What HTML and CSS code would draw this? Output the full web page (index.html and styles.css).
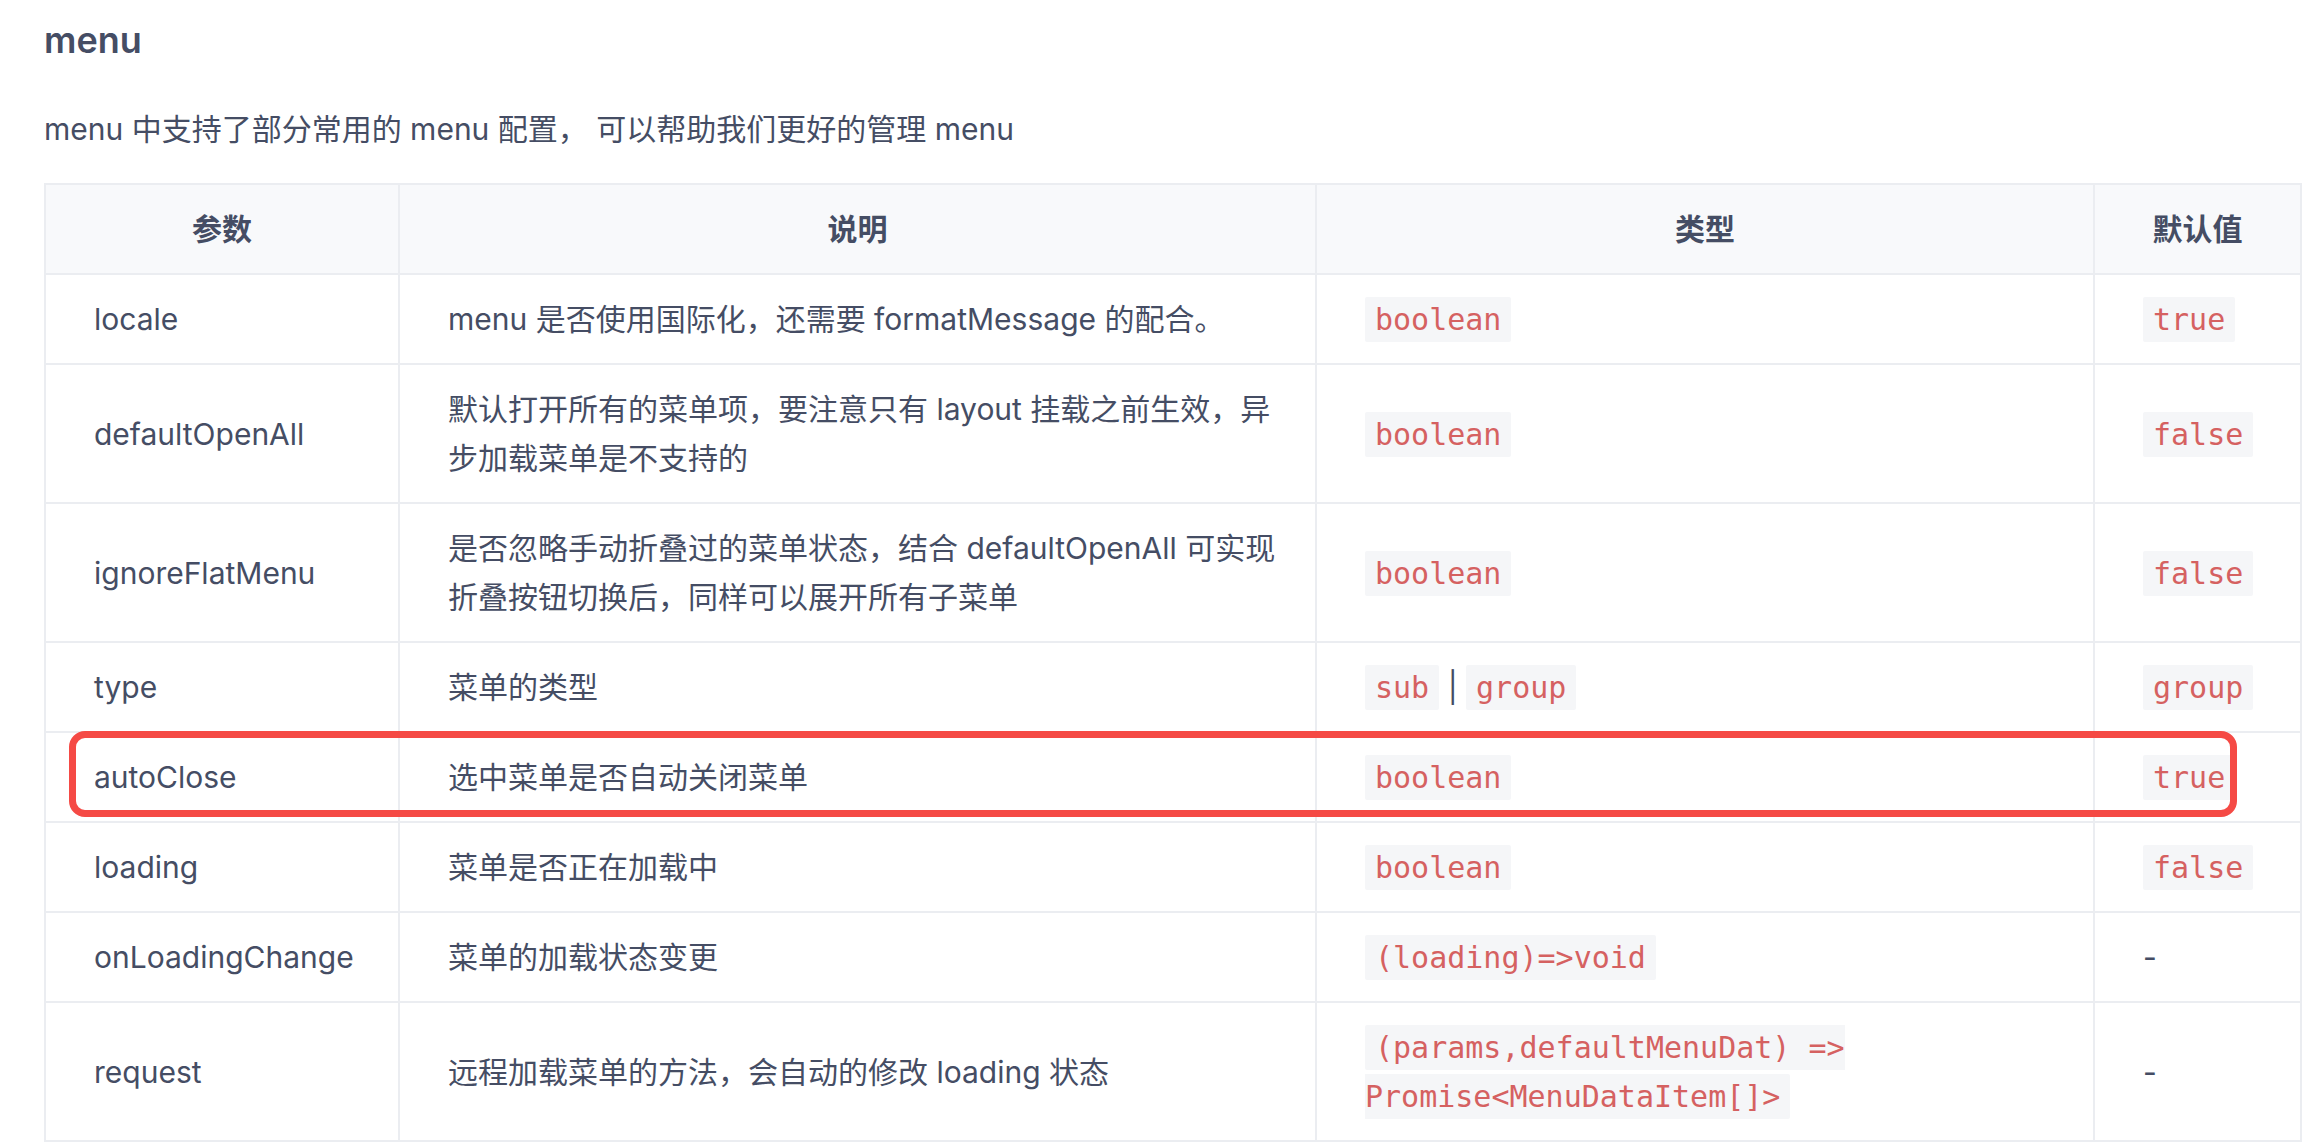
FILE: index.html
```html
<!DOCTYPE html>
<html lang="zh-CN">
<head>
<meta charset="utf-8">
<title>menu</title>
<link rel="stylesheet" href="styles.css">
</head>
<body>
<h2 class="title">menu</h2>
<p class="desc">menu 中支持了部分常用的 menu 配置， 可以帮助我们更好的管理 menu</p>
<div class="table-wrap">
  <table class="api">
    <colgroup>
      <col class="c-name">
      <col class="c-desc">
      <col class="c-type">
      <col class="c-def">
    </colgroup>
    <thead>
      <tr><th>参数</th><th>说明</th><th>类型</th><th>默认值</th></tr>
    </thead>
    <tbody>
      <tr>
        <td>locale</td>
        <td>menu 是否使用国际化，还需要 formatMessage 的配合。</td>
        <td><code>boolean</code></td>
        <td><code>true</code></td>
      </tr>
      <tr>
        <td>defaultOpenAll</td>
        <td>默认打开所有的菜单项，要注意只有 layout 挂载之前生效，异步加载菜单是不支持的</td>
        <td><code>boolean</code></td>
        <td><code>false</code></td>
      </tr>
      <tr>
        <td>ignoreFlatMenu</td>
        <td>是否忽略手动折叠过的菜单状态，结合 defaultOpenAll 可实现折叠按钮切换后，同样可以展开所有子菜单</td>
        <td><code>boolean</code></td>
        <td><code>false</code></td>
      </tr>
      <tr>
        <td>type</td>
        <td>菜单的类型</td>
        <td><code>sub</code> | <code>group</code></td>
        <td><code>group</code></td>
      </tr>
      <tr>
        <td>autoClose</td>
        <td>选中菜单是否自动关闭菜单</td>
        <td><code>boolean</code></td>
        <td><code>true</code></td>
      </tr>
      <tr>
        <td>loading</td>
        <td>菜单是否正在加载中</td>
        <td><code>boolean</code></td>
        <td><code>false</code></td>
      </tr>
      <tr>
        <td>onLoadingChange</td>
        <td>菜单的加载状态变更</td>
        <td><code>(loading)=&gt;void</code></td>
        <td>-</td>
      </tr>
      <tr>
        <td>request</td>
        <td>远程加载菜单的方法，会自动的修改 loading 状态</td>
        <td><code>(params,defaultMenuDat) =&gt; Promise&lt;MenuDataItem[]&gt;</code></td>
        <td>-</td>
      </tr>
    </tbody>
  </table>
  <div class="highlight"></div>
</div>
</body>
</html>
```
FILE: styles.css
```css
html, body {
  margin: 0;
  background: #ffffff;
}

body {
  padding: 16px 18px 0 44px;
  font-family: Inter, "Noto Sans CJK SC", sans-serif;
  color: #454d64;
}

.title {
  margin: 0;
  font-size: 36px;
  line-height: 48px;
  font-weight: 600;
  color: #454d64;
}

.desc {
  margin: 41px 0 0;
  font-size: 30px;
  line-height: 48px;
}

.table-wrap {
  position: relative;
  margin-top: 30px;
  width: 2256px;
}

.api {
  width: 2256px;
  table-layout: fixed;
  border-collapse: collapse;
  font-size: 30px;
  line-height: 49px;
}

.c-name { width: 354px; }
.c-desc { width: 917px; }
.c-type { width: 778px; }
.c-def  { width: 207px; }

.api th,
.api td {
  border: 2px solid #ebedf1;
  vertical-align: middle;
}

.api th {
  height: 88px;
  padding: 0 20px;
  background: #f8f9fb;
  font-weight: 600;
  text-align: center;
  color: #454d64;
}

.api td {
  padding: 20px 30px 19px 48px;
  text-align: left;
}

.api code {
  font-family: "DejaVu Sans Mono", monospace;
  font-size: 30px;
  color: #d56161;
  background: #f5f6f8;
  padding: 5px 10px;
  border-radius: 2px;
}

.highlight {
  position: absolute;
  left: 25px;
  top: 548px;
  width: 2168px;
  height: 86px;
  box-sizing: border-box;
  border: 7px solid #f54a45;
  border-radius: 16px;
  pointer-events: none;
}
```
